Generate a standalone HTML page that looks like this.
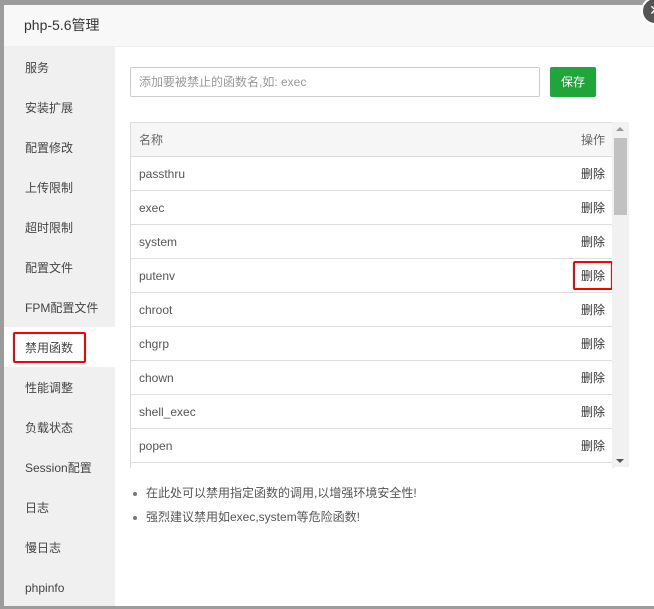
<!DOCTYPE html><html><head><style>
body{margin:0;width:654px;height:606px;overflow:hidden;background:#9c9c9c;font-family:"Liberation Sans","Noto Sans CJK SC",sans-serif;font-size:12px;color:#555;position:relative}
.dlg{position:absolute;left:4px;top:5px;width:650px;height:601px;background:#fff}
.hd{height:41px;background:#f8f8f8;border-bottom:1px solid #eee;font-size:14px;color:#333;line-height:41px;padding-left:20px}
.close{position:absolute;left:637px;top:-8px;width:24px;height:24px;border-radius:50%;background:#555;border:2px solid #fff;color:#fff;font-size:14px;line-height:22px;text-align:center}
.side{position:absolute;left:0;top:42px;width:111px;height:559px;background:#f0f0f0}
.side div{height:40px;line-height:42px;padding-left:21px;color:#444;font-size:12px}
.side .on{background:#fff;position:relative}
.side .on span{position:absolute;left:9px;top:5px;width:69px;height:27px;border:2px solid #f00;border-radius:2px}
.in{position:absolute;left:126px;top:62px;width:400px;height:28px;border:1px solid #ccc;border-radius:2px;color:#999;line-height:28px;padding-left:8px}
.btn{position:absolute;left:546px;top:62px;width:46px;height:30px;background:#20a53a;border-radius:2px;color:#fff;text-align:center;line-height:30px;font-size:12px}
.tbl{position:absolute;left:126px;top:117px;width:482px;height:345px;border:1px solid #ddd;border-bottom:none;overflow:hidden}
.tr{height:33px;border-bottom:1px solid #ddd;line-height:35px;padding:0 8px;position:relative;color:#555}
.tr b{position:absolute;right:8px;top:0;font-weight:normal;color:#333}
.th{background:#f6f6f6;color:#666}
.th b{color:#666}
.sb{position:absolute;left:608px;top:117px;width:17px;height:345px;background:#f1f1f1}
.tips{position:absolute;left:126px;top:476px;color:#555}
.tips div{height:24px;line-height:24px;padding-left:16px;position:relative}
.tips div:before{content:"";position:absolute;left:3px;top:11px;width:4px;height:4px;border-radius:50%;background:#777}
</style></head><body>
<div class="dlg">
<div class="hd">php-5.6管理</div>
<div class="close">✕</div>
<div class="side">
<div>服务</div><div>安装扩展</div><div>配置修改</div><div>上传限制</div><div>超时限制</div><div>配置文件</div><div>FPM配置文件</div><div class="on">禁用函数<span></span></div><div>性能调整</div><div>负载状态</div><div>Session配置</div><div>日志</div><div>慢日志</div><div>phpinfo</div>
</div>
<div class="in">添加要被禁止的函数名,如: exec</div>
<div class="btn">保存</div>
<div class="tbl">
<div class="tr th">名称<b>操作</b></div>
<div class="tr">passthru<b>删除</b></div>
<div class="tr">exec<b>删除</b></div>
<div class="tr">system<b>删除</b></div>
<div class="tr">putenv<b>删除<span style="position:absolute;left:-8px;top:2px;width:36px;height:25px;border:2px solid #f00;border-radius:2px"></span></b></div>
<div class="tr">chroot<b>删除</b></div>
<div class="tr">chgrp<b>删除</b></div>
<div class="tr">chown<b>删除</b></div>
<div class="tr">shell_exec<b>删除</b></div>
<div class="tr">popen<b>删除</b></div>
<div class="tr">proc_open<b>删除</b></div>
</div>
<div class="sb"><div style="position:absolute;left:4px;top:5px;border:4px solid transparent;border-bottom:4px solid #999;border-top:none"></div><div style="position:absolute;left:2px;top:16px;width:13px;height:77px;background:#c1c1c1"></div><div style="position:absolute;left:4px;bottom:4px;border:4px solid transparent;border-top:4px solid #555;border-bottom:none"></div></div>
<div class="tips"><div>在此处可以禁用指定函数的调用,以增强环境安全性!</div><div>强烈建议禁用如exec,system等危险函数!</div></div>
</div>
</body></html>
